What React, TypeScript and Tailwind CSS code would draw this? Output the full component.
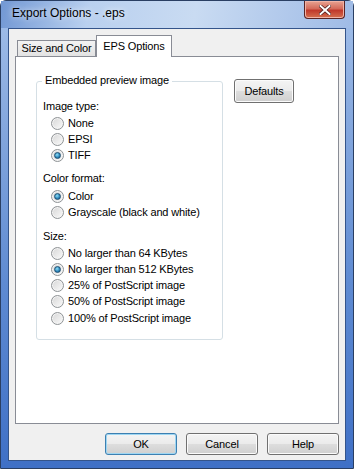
import React from 'react';

const font = { fontFamily: '"Liberation Sans", Arial, sans-serif' };

const Radio = ({ label, checked }: { label: string; checked?: boolean }) => (
  <div className="flex h-[16px] items-center pl-[8px]">
    <div className="flex h-[13px] w-[13px] items-center justify-center rounded-full border border-[#8f9396] bg-[linear-gradient(135deg,#d6d6d6,#fbfbfb)] shadow-[inset_0_0_0_1px_#f4f4f4]">
      {checked && (
        <div className="h-[7px] w-[7px] rounded-full border border-[#1d4f72] bg-[radial-gradient(circle_at_40%_35%,#8ee0f8,#2b83b8_60%,#15557e)]" />
      )}
    </div>
    <span className="ml-[4px] whitespace-nowrap text-[11px] leading-none tracking-[-0.15px] text-black">{label}</span>
  </div>
);

const Label = ({ text, mt }: { text: string; mt: string }) => (
  <div className={`${mt} flex h-[16px] items-center text-[11px] leading-none tracking-[-0.15px]`}>{text}</div>
);

const Btn = ({ label, def, w }: { label: string; def?: boolean; w: string }) => (
  <button
    className={`${w} flex items-center justify-center rounded-[3px] border ${
      def ? 'border-[#3c7fb1] shadow-[inset_0_0_0_1px_#9ed6f2]' : 'border-[#707070] shadow-[inset_0_0_0_1px_#fbfbfb]'
    } bg-[linear-gradient(to_bottom,#f4f4f4_0%,#ebebeb_48%,#dddddd_52%,#cfcfcf_100%)] text-[11px] tracking-[-0.15px] text-black`}
  >
    {label}
  </button>
);

export default function App() {
  return (
    <div style={font} className="h-[469px] w-[354px] bg-white">
      <div className="flex h-full w-full flex-col rounded-t-[6px] border border-[#2a3f63] bg-[linear-gradient(to_bottom,#a3c0ea_0%,#8cade0_20%,#5f8bd2_60%,#3f70c6_100%)]">
        {/* title bar */}
        <div className="flex h-[27px] items-start justify-between bg-[linear-gradient(100deg,#7298d4_0%,#b9d0ef_25%,#c9dbf2_55%,#9fbbe6_100%)] pl-[11px] pr-[8px]">
          <span className="mt-[6px] text-[12px] leading-none text-black [text-shadow:0_0_6px_#ffffff]">Export Options - .eps</span>
          <div className="flex h-[18px] w-[41px] items-center justify-center rounded-b-[4px] border border-t-0 border-[#5a2424] bg-[linear-gradient(to_bottom,#e8a493_0%,#d46a5a_45%,#c0392b_55%,#d5704f_100%)] shadow-[inset_0_0_0_1px_#f0b3a6]">
            <svg width="12" height="10" viewBox="0 0 12 10">
              <path d="M1.5 1 L10.5 9 M10.5 1 L1.5 9" stroke="#4a1a1a" strokeWidth="3.4" strokeLinecap="square" />
              <path d="M1.5 1 L10.5 9 M10.5 1 L1.5 9" stroke="#ffffff" strokeWidth="2" strokeLinecap="square" />
            </svg>
          </div>
        </div>

        {/* client area */}
        <div className="mx-[7px] mb-[7px] flex flex-1 flex-col border border-[#34548a] bg-[#f0f0f0] px-[6px] pt-[6px]">
          {/* tabs */}
          <div className="flex h-[21px] items-end pl-[2px]">
            <div className="flex h-[16px] w-[79px] items-center justify-center whitespace-nowrap border border-b-0 border-[#898c95] bg-[linear-gradient(to_bottom,#f3f3f3,#e3e3e3)] text-[11px] leading-none tracking-[-0.15px]">
              Size and Color
            </div>
            <div className="relative z-10 -mb-px flex h-[22px] w-[76px] items-start justify-center whitespace-nowrap border border-b-0 border-[#898c95] bg-white pt-[5px] text-[11px] leading-none tracking-[-0.15px]">
              EPS Options
            </div>
          </div>

          {/* panel */}
          <div className="flex h-[368px] border border-[#898c95] bg-white pl-[20px] pt-[19px]">
            <div className="relative mt-[5px] flex h-[259px] w-[187px] flex-col rounded-[3px] border border-[#d5dfe5] pl-[6px] pt-[16px]">
              <span className="absolute left-[5px] top-[-7px] whitespace-nowrap bg-white px-[3px] text-[11px] leading-none tracking-[-0.15px]">Embedded preview image</span>
              <Label text="Image type:" mt="mt-0" />
              <div className="mt-[1px]">
                <Radio label="None" />
                <Radio label="EPSI" />
                <Radio label="TIFF" checked />
              </div>
              <Label text="Color format:" mt="mt-[7px]" />
              <div className="mt-[2px]">
                <Radio label="Color" checked />
                <Radio label="Grayscale (black and white)" />
              </div>
              <Label text="Size:" mt="mt-[8px]" />
              <div className="mt-[1px] flex flex-col gap-[0.3px]">
                <Radio label="No larger than 64 KBytes" />
                <Radio label="No larger than 512 KBytes" checked />
                <Radio label="25% of PostScript image" />
                <Radio label="50% of PostScript image" />
                <Radio label="100% of PostScript image" />
              </div>
            </div>
            <div className="ml-[11px] mt-[3px]">
              <Btn label="Defaults" w="w-[60px] h-[24px]" />
            </div>
          </div>

          {/* bottom buttons */}
          <div className="mt-[9px] flex justify-end gap-[9px]">
            <Btn label="OK" def w="w-[72px] h-[22px]" />
            <Btn label="Cancel" w="w-[72px] h-[22px]" />
            <Btn label="Help" w="w-[72px] h-[22px]" />
          </div>
        </div>
      </div>
    </div>
  );
}
